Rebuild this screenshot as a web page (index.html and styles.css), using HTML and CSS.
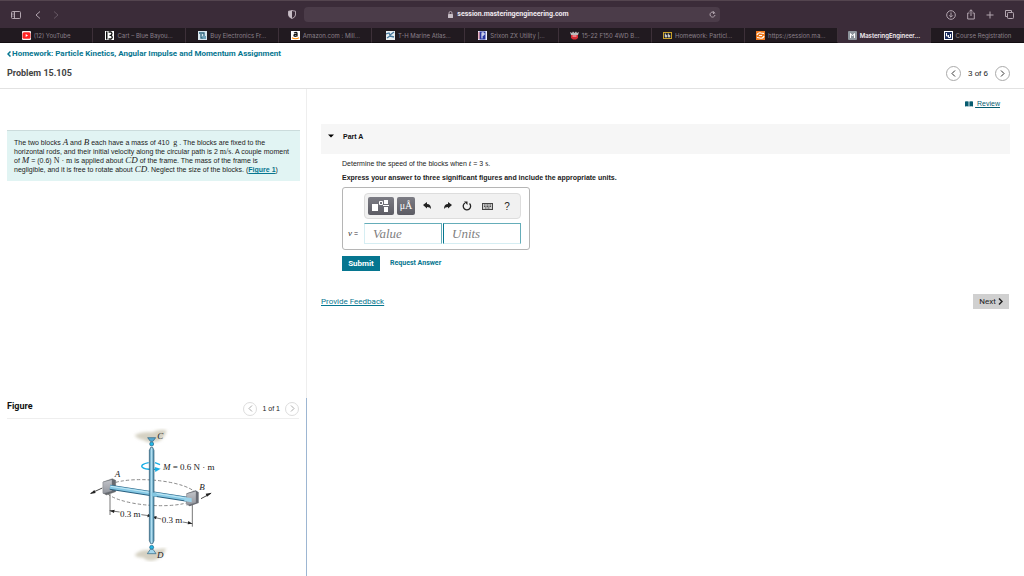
FILE: index.html
```html
<!DOCTYPE html>
<html lang="en">
<head>
<meta charset="utf-8">
<title>MasteringEngineering</title>
<link rel="stylesheet" href="styles.css">
</head>
<body>
<header class="browser">
  <div class="toolbar">
    <div class="tool-group tool-left">
      <button class="chrome-btn" aria-label="Sidebar"><svg width="10" height="8" viewBox="0 0 10 8"><rect x=".5" y=".5" width="9" height="7" rx="1"/><path d="M3.5 .5v7M1.5 2.2h1M1.5 3.7h1M1.5 5.2h1"/></svg></button>
      <button class="chrome-btn" aria-label="Back"><svg width="6" height="8" viewBox="0 0 6 8"><path d="M5 .5L1 4l4 3.500"/></svg></button>
      <button class="chrome-btn dim" aria-label="Forward"><svg width="6" height="8" viewBox="0 0 6 8"><path d="M1 .5L5 4 1 7.500"/></svg></button>
    </div>
    <button class="chrome-btn shield" aria-label="Privacy report"><svg width="8" height="9" viewBox="0 0 8 9"><path d="M4 .5Q6 1 7.500 1.200V5Q7.200 7.500 4 8.500 .8 7.500 .5 5V1.200Q2 1 4 .5z"/><path class="solid" d="M4 .5V8.500Q.8 7.500 .5 5V1.200Q2 1 4 .5z"/></svg></button>
    <div class="address">
      <span class="address-text"><svg width="5" height="7" viewBox="0 0 5 7"><rect class="lock" y="3" width="5" height="4" rx=".5"/><path d="M1 3V2a1.500 1.500 0 0 1 3 0v1"/></svg>session.masteringengineering.com</span>
      <button class="chrome-btn" aria-label="Reload"><svg width="7" height="7" viewBox="0 0 7 7"><path d="M5.800 2.500A2.500 2.500 0 1 0 6 4M3.700 .3L5.500 1.500 4 3"/></svg></button>
    </div>
    <div class="tool-group tool-right">
      <button class="chrome-btn" aria-label="Downloads"><svg width="10" height="10" viewBox="0 0 10 10"><circle cx="5" cy="5" r="4.300"/><path d="M5 2.500v4.500M3.200 5.400L5 7.200l1.800-1.800"/></svg></button>
      <button class="chrome-btn" aria-label="Share"><svg width="8" height="11" viewBox="0 0 8 11"><path d="M2.500 4H.7v6h6.600V4H5.500M4 7V.8M2.300 2.500L4 .8l1.700 1.700"/></svg></button>
      <button class="chrome-btn" aria-label="New tab"><svg width="8" height="8" viewBox="0 0 8 8"><path d="M4 .5v7M.5 4h7"/></svg></button>
      <button class="chrome-btn" aria-label="Tab overview"><svg width="9" height="9" viewBox="0 0 9 9"><rect x="2.500" y="2.500" width="6" height="6" rx=".8"/><path d="M2.500 6.500H.5v-6h6v2"/></svg></button>
    </div>
  </div>
  <nav class="tabs">
    <a class="tab" href="#"><svg class="fav" viewBox="0 0 9 9"><rect width="9" height="9" rx="1" fill="#f4f4f4"/><rect x=".5" y="1.200" width="8" height="6.600" rx="1.500" fill="#f22"/><path d="M3.700 3v3l2.300-1.500z" fill="#fff"/></svg>(12) YouTube</a>
    <a class="tab" href="#"><svg class="fav" viewBox="0 0 9 9"><rect width="9" height="9" fill="#fff"/><rect x="1" y=".5" width="1.500" height="8" fill="#111"/><path d="M3.500 1h2.500q2 1.500 0 3.300 2.500 1.800 0 3.700H3.500M4.500 4.300h1.500" fill="none" stroke="#111" stroke-width="1.300"/></svg>Cart – Blue Bayou...</a>
    <a class="tab" href="#"><svg class="fav" viewBox="0 0 9 9"><rect width="9" height="9" fill="#d8e6ee"/><path d="M1 2h5v5H3V3" fill="none" stroke="#2d647c" stroke-width="1.300"/><path d="M4 5h4v3H5z" fill="#6d9fb6"/></svg>Buy Electronics Fr...</a>
    <a class="tab" href="#"><svg class="fav" viewBox="0 0 9 9"><rect width="9" height="9" fill="#fff"/><path d="M3 2q3-1.500 3 .5v3M6 3.200q-3 0-3 1.300t3 .3" fill="none" stroke="#111" stroke-width="1.300"/><path d="M1 6.700q3.500 2 7 0" fill="none" stroke="#f80" stroke-width="1.100"/></svg>Amazon.com : Mill...</a>
    <a class="tab" href="#"><svg class="fav" viewBox="0 0 9 9"><rect width="9" height="9" fill="#e8eef2"/><path d="M0 3l3-1 1 2 4-3M1 7l3-2 4 1" fill="none" stroke="#46779c" stroke-width="1.300"/></svg>T-H Marine Atlas...</a>
    <a class="tab" href="#"><svg class="fav" viewBox="0 0 9 9"><rect width="9" height="9" fill="#eef"/><rect x="1.500" y=".5" width="6" height="8" fill="#2935a0"/><path d="M4 1.500v6M4 2h2v2H4" fill="none" stroke="#fff"/><path d="M1 1v7" stroke="#d55" stroke-width=".7"/></svg>Srixon ZX Utility |...</a>
    <a class="tab" href="#"><svg class="fav" viewBox="0 0 9 9"><path d="M0 1l2 1 1-1.500L4.500 2 6 .5 7 2l2-1-1 3H1z" fill="#bbb"/><path d="M1 4h7v3L6 8.500H3L1 7z" fill="#d72c35"/><path d="M2.500 5h4" stroke="#fff" stroke-width=".8"/></svg>15-22 F150 4WD B...</a>
    <a class="tab" href="#"><svg class="fav" viewBox="0 0 9 9"><rect x=".5" y="1.500" width="8" height="6" fill="#222" stroke="#c9a02a"/><path d="M2.300 2.500v3.500h1.400V4.300H2.300M5.300 2.500v3.500h1.400V4.300H5.300" fill="none" stroke="#fff" stroke-width=".8"/></svg>Homework: Particl...</a>
    <a class="tab" href="#"><svg class="fav" viewBox="0 0 9 9"><rect width="9" height="9" fill="#f07b20"/><path d="M1 4q1-3 4-2l3 .5M8 5q-1 3-4 2L1 6.500M3 4.500h3" fill="none" stroke="#fff" stroke-width="1.200"/></svg>https://session.ma...</a>
    <a class="tab active" href="#"><svg class="fav" viewBox="0 0 9 9"><rect width="9" height="9" rx="1" fill="#8d949c"/><path d="M2.500 7V2.500l2 2.500 2-2.500V7" fill="none" stroke="#fff"/></svg>MasteringEngineer...</a>
    <a class="tab" href="#"><svg class="fav" viewBox="0 0 9 9"><rect x=".5" y=".5" width="8" height="8" fill="#1d2d5c" stroke="#fff"/><path d="M2.500 2v3h2M4.500 4v2.500h2V3" fill="none" stroke="#fff"/></svg>Course Registration</a>
  </nav>
</header>

<div class="page-head">
  <div class="titles">
    <a class="crumb" href="#"><svg width="4" height="6" viewBox="0 0 4 6"><path d="M3.500 .5L1 3l2.500 2.500"/></svg>Homework: Particle Kinetics, Angular Impulse and Momentum Assignment</a>
    <h1 class="problem">Problem 15.105</h1>
  </div>
  <div class="pager">
    <button class="round" aria-label="Previous problem"><svg width="5" height="7" viewBox="0 0 5 7"><path d="M4 .5l-3 3 3 3"/></svg></button>
    <span>3 of 6</span>
    <button class="round" aria-label="Next problem"><svg width="5" height="7" viewBox="0 0 5 7"><path d="M1 .5l3 3-3 3"/></svg></button>
  </div>
</div>

<div class="columns">
  <aside class="side">
    <p class="statement">The two blocks <i>A</i> and <i>B</i> each have a mass of 410 &nbsp;<span class="math">g</span> . The blocks are fixed to the<br>horizontal rods, and their initial velocity along the circular path is 2 <span class="math">m/s</span>. A couple moment<br>of <i>M</i> = (0.6) <span class="math">N · m</span> is applied about <i>CD</i> of the frame. The mass of the frame is<br>negligible, and it is free to rotate about <i>CD</i>. Neglect the size of the blocks. (<a href="#">Figure 1</a>)</p>
    <section class="figure">
      <div class="figure-head">
        <h2>Figure</h2>
        <div class="pager small">
          <button class="round" aria-label="Previous figure"><svg width="5" height="7" viewBox="0 0 5 7"><path d="M4 .5l-3 3 3 3"/></svg></button>
          <span>1 of 1</span>
          <button class="round" aria-label="Next figure"><svg width="5" height="7" viewBox="0 0 5 7"><path d="M1 .5l3 3-3 3"/></svg></button>
        </div>
      </div>
      <svg class="diagram" width="170" height="145" viewBox="0 0 510 435" role="img" aria-label="Frame with blocks A and B on shaft CD">
        <defs>
          <linearGradient id="shaft"><stop offset="0" stop-color="#397d9f"/><stop offset=".45" stop-color="#b4e1f3"/><stop offset="1" stop-color="#3f82a3"/></linearGradient>
          <linearGradient id="block" x2="0" y2="1"><stop offset="0" stop-color="#c2c4c9"/><stop offset="1" stop-color="#92959d"/></linearGradient>
          <filter id="soft"><feGaussianBlur stdDeviation="4"/></filter>
        </defs>
        <path d="M194 30q25-12 52-8 20-11 44-6-6 24-24 33-32 7-46-4-20-4-26-15z" fill="#d5d1c3" filter="url(#soft)"/>
        <path d="M194 390q18-18 44-14l50-6q-8 27-30 34-25 8-38-6-20 0-26-8z" fill="#d5d1c3" filter="url(#soft)"/>
        <ellipse cx="243" cy="203" rx="137" ry="38" transform="rotate(4 243 203)" fill="none" stroke="#777" stroke-width="2.500" stroke-dasharray="10 6"/>
        <path d="M236 113c-34 6-26 22 22 20" fill="none" stroke="#18aee5" stroke-width="4"/>
        <path d="M255 113l15 6" stroke="#18aee5" stroke-width="4"/>
        <g stroke="#333" stroke-width="2"><path d="M120 207v63M367 240v65M119 257l30 4M214 269l30 4M248 276l26 6M338 291l29 5"/></g>
        <path d="M119 257l15-3-2 10zM367 296l-14 2 2-10zM245 273l-13 4 2-10zM247 276l13-3-2 10z" fill="#222"/>
        <path d="M97 189l-35 16M393 221l30-16" stroke="#222" stroke-width="2.500"/>
        <path d="M60 207l13-12 4 9zM425 203l-18 3 4 9z" fill="#222"/>
        <path d="M99 171l28-10 10 5v34l-28 10-10-6z" fill="#666a70" stroke="#555" stroke-width="1"/>
        <path d="M99 171l27-7v34l-27 8z" fill="url(#block)" stroke="#70757b"/>
        <path d="M120 187l232 36" stroke="#286080" stroke-width="15"/>
        <path d="M120 186l232 36" stroke="#86c9e5" stroke-width="10"/>
        <path d="M122 184l230 36" stroke="#c3e9f6" stroke-width="3"/>
        <path d="M350 205l27-9 9 6v32l-27 10-9-6z" fill="#686b73"/>
        <path d="M350 206l28-7v34l-28 8z" fill="url(#block)" stroke="#72767b"/>
        <path d="M343 216l22 4v12l-22-4z" fill="#9bd3ea"/>
        <path d="M238 76l4-9h6l4 9v271l-4 9h-6l-4-9z" fill="url(#shaft)" stroke="#315c74" stroke-width="2"/>
        <path d="M245 202l15 3v11l-15-3z" fill="#83c6e1"/>
        <path d="M233 38h24l-8 11h-8z" fill="#56a7cf" stroke="#286080" stroke-width="2"/>
        <circle cx="245" cy="57" r="6" fill="#20b7e6" stroke="#286080" stroke-width="2"/>
        <circle cx="245" cy="367" r="6" fill="#20b7e6" stroke="#286080" stroke-width="2"/>
        <path d="M241 373h8l9 13h-26z" fill="#a5d7ec" stroke="#286080" stroke-width="2"/>
        <path d="M254 126l18 5-16 10z" fill="#18aee5"/>
        <g class="diagram-text">
          <text x="262" y="41" class="it">C</text><text x="134" y="156" class="it">A</text><text x="388" y="194" class="it">B</text><text x="261" y="398" class="it">D</text>
          <text x="279" y="136"><tspan class="it">M</tspan> = 0.6 N · m</text>
          <text x="150" y="276">0.3 m</text><text x="275" y="294">0.3 m</text>
        </g>
      </svg>
    </section>
  </aside>

  <main class="main">
    <a class="review" href="#"><svg width="8" height="6" viewBox="0 0 8 6"><path d="M0 .5Q2 0 3.600 .5v5Q2 5 0 5.500zM4.400 .5Q6 0 8 .5v5q-2-.5-3.600 0z"/></svg><span>&nbsp;Review</span></a>
    <h2 class="part"><svg width="6" height="4" viewBox="0 0 6 4"><path d="M0 .5h6L3 3.500z"/></svg>Part A</h2>
    <form class="answer">
      <p>Determine the speed of the blocks when <i>t</i> = 3 <span class="math">s</span>.</p>
      <p class="instruction">Express your answer to three significant figures and include the appropriate units.</p>
      <div class="answer-box">
        <div class="math-tools">
          <button type="button" class="dark" aria-label="Templates"><svg width="20" height="14" viewBox="0 0 20 14"><path class="white" d="M1 5h6v7H1zM13 1h4v4h-4zM13 8h4v5h-4zM12 6h6v1h-6z"/><path class="outline" d="M8.500 2.500h3v3h-3z"/></svg></button>
          <button type="button" class="dark mu">μÅ</button>
          <button type="button" class="plain" aria-label="Undo"><svg width="9" height="8" viewBox="0 0 9 8"><path class="fill" d="M0 3L4 0v2q4 0 4 5-1-2-4-2v1.500z"/></svg></button>
          <button type="button" class="plain" aria-label="Redo"><svg width="9" height="8" viewBox="0 0 9 8"><path class="fill" d="M9 3L5 0v2Q1 2 1 7q1-2 4-2v1.500z"/></svg></button>
          <button type="button" class="plain" aria-label="Reset"><svg width="10" height="10" viewBox="0 0 10 10"><path class="line" d="M3 2a3.700 3.700 0 1 0 4.500.5"/><path class="fill" d="M2 .5h3.500V4z"/></svg></button>
          <button type="button" class="plain" aria-label="Keyboard"><svg width="11" height="7" viewBox="0 0 11 7"><rect x=".5" y=".5" width="10" height="6" fill="#ccc" stroke="#444"/><path d="M2 2h7M2 3.500h7M3 5h5" stroke="#444" stroke-width=".9" stroke-dasharray="1 .5"/></svg></button>
          <button type="button" class="plain help">?</button>
        </div>
        <label class="v-label" for="value"><i>v</i> =</label>
        <div class="fields"><input id="value" placeholder="Value"><input id="units" placeholder="Units" aria-label="Units"></div>
      </div>
      <div class="actions"><button type="button" class="submit">Submit</button><a href="#">Request Answer</a></div>
    </form>
    <div class="foot"><a href="#">Provide Feedback</a><button class="next">Next <svg width="5" height="7" viewBox="0 0 5 7"><path d="M1 .5l3 3-3 3"/></svg></button></div>
  </main>
</div>
</body>
</html>
```

FILE: styles.css
```css
* { box-sizing: border-box; }
body { margin: 0; min-height: 100vh; display: flex; flex-direction: column; background: #fff; color: #222; font: 7px/9px "Liberation Sans", Arial, sans-serif; }
h1, h2, p { margin: 0; }
button { padding: 0; border: 0; background: none; color: inherit; font: inherit; display: inline-flex; align-items: center; justify-content: center; }
svg { flex: none; }
a { color: #067690; }

.browser { background: #3b2c39; border-top: 1px solid #54454f; }
.toolbar { height: 27px; display: grid; grid-template-columns: 287px 10px minmax(0, 423px) 1fr; align-items: center; }
.chrome-btn svg, .address svg { fill: none; stroke: #b3a6b0; }
.chrome-btn .solid, .address .lock { fill: #c8bec6; stroke: none; }
.dim { opacity: .35; }
.tool-left { display: flex; gap: 14px; padding-left: 11px; align-items: center; }
.tool-left .dim { margin-left: -2px; }
.tool-right { display: flex; gap: 11px; padding-right: 10px; justify-content: flex-end; align-items: center; }
.address { margin-left: 7px; height: 15px; border-radius: 4px; background: #4b3c49; display: flex; align-items: center; padding: 0 4px; }
.address-text { flex: 1; display: flex; gap: 4px; align-items: center; justify-content: center; color: #f0eaf0; font: bold 7px/9px Roboto, "Liberation Sans", sans-serif; }
.tabs { height: 15px; display: grid; grid-template-columns: repeat(11, minmax(0, 1fr)); background: #211a20; }
.tab { display: flex; align-items: center; justify-content: center; gap: 3px; color: #8b808a; text-decoration: none; font: 6px/9px Inter, "Liberation Sans", sans-serif; white-space: nowrap; border-right: 1px solid #3d3039; border-bottom: 1px solid #120d11; }
.tab:last-child { border-right: 0; }
.tab.active { background: #3b2c39; color: #f2edf2; font-weight: 600; border-bottom-color: #3b2c39; }
.fav { width: 9px; height: 9px; }

.page-head { height: 46px; border-bottom: 1px solid #e2e2e2; display: flex; justify-content: space-between; padding: 6px 14px 0 7px; }
.titles { display: flex; flex-direction: column; gap: 8px; }
.crumb { display: flex; align-items: center; gap: 1px; font: bold 8px/10px Roboto, "Liberation Sans", sans-serif; text-decoration: none; }
.crumb svg { fill: none; stroke: currentColor; stroke-width: 1.5; }
.problem { font: bold 9px/12px Roboto, "Liberation Sans", sans-serif; color: #444; }
.pager { display: flex; align-items: center; gap: 7px; font-size: 8px; }
.page-head .pager { padding-top: 10px; }
.round { width: 15px; height: 15px; border: 1px solid #aaa; border-radius: 50%; }
.round svg { fill: none; stroke: #333; }
.small { gap: 5px; font-size: 7px; }
.small .round { width: 14px; height: 14px; border-color: #ddd; }
.small .round svg { stroke: #aaa; }
.pager.small { padding-top: 1px; }

.columns { flex: 1; display: grid; grid-template-columns: 307px minmax(0, 1fr); }
.side { display: flex; flex-direction: column; justify-content: space-between; padding-top: 41px; }
.main { border-left: 1px solid #eee; margin-left: -1px; }
.statement { margin: 0 7px; padding: 7px; background: #e1f4f3; border-top: 1px solid #cbdcdc; white-space: nowrap; }
.statement a { font-weight: bold; }
i, .math { font-family: "Liberation Serif", "Times New Roman", serif; }
.math { font-size: 8px; line-height: 8px; }
i { font-size: 9px; line-height: 8px; }
.figure { border-right: 1px solid #9db6d2; position: relative; min-height: 178px; padding-left: 7px; }
.figure-head { display: flex; justify-content: space-between; height: 21px; margin-right: 7px; border-bottom: 1px solid #eee; }
.figure h2 { font: bold 9px/17px Roboto, "Liberation Sans", sans-serif; color: #111; }
.diagram { display: block; margin: 6px 0 6px 63px; }
.diagram-text { font: 27px "Liberation Serif", serif; fill: #222; }
.it { font-style: italic; }

.review { display: flex; justify-content: flex-end; align-items: center; padding: 10px 24px 0 0; text-decoration: none; color: #075c70; }
.review span { text-decoration: underline; }
.review svg { fill: currentColor; margin-right: 2px; }
.part { margin: 16px 14px 0; height: 30px; padding: 0 0 6px 7px; background: #f6f6f6; display: flex; align-items: center; gap: 9px; font-size: 7px; color: #111; }
.part + .answer { margin: 5px 14px 0 35px; }
.answer { display: flex; flex-direction: column; align-items: flex-start; }
.answer .instruction { margin-top: 5px; font-weight: bold; }
.answer-box { margin-top: 5px; border: 1px solid #b5b5b5; border-radius: 3px; padding: 5px 8px 5px 5px; display: grid; grid-template-columns: 16px 157px; row-gap: 4px; align-items: center; }
.math-tools { grid-column: 2; height: 26px; border: 1px solid #ddd; border-radius: 4px; background: #f1f1f1; display: flex; align-items: center; padding: 0 3px; }
.dark { height: 18px; width: 26px; border-radius: 2px; background: linear-gradient(#7c7c84, #5c5c64); color: #fff; }
.mu { width: 18px; margin: 0 2px 0 3px; font: 10px/12px "Liberation Serif", serif; }
.plain { flex: 1; height: 18px; }
.plain .fill { fill: #222; }
.plain .line { fill: none; stroke: #222; stroke-width: 1.3; }
.white { fill: #fff; }
.outline { fill: none; stroke: #fff; }
.help { font-size: 10px; }
.v-label { color: #333; white-space: nowrap; }
.fields { display: grid; grid-template-columns: 1fr 1fr; gap: 1px; }
.fields input { min-width: 0; height: 21px; padding: 0 8px; border: 1px solid #65adb9; border-bottom-color: #d6eef3; border-radius: 0; background: #fff; color: #333; font: italic 13px/18px "Liberation Serif", serif; }
.fields input:first-child { border-left-color: #d6eef3; }
.fields input:last-child { border-left-color: #067690; }
.fields input::placeholder { color: #808080; opacity: 1; }
.actions { display: flex; align-items: center; gap: 10px; margin-top: 6px; font: bold 7px/9px Roboto, "Liberation Sans", sans-serif; }
.actions a { text-decoration: none; }
.submit { width: 38px; height: 15px; background: #067690; color: #fff; font-size: 8px; }
.foot { margin: 23px 15px 0 14px; display: flex; justify-content: space-between; align-items: center; font: 8px/10px Roboto, "Liberation Sans", sans-serif; }
.next { width: 36px; height: 15px; background: #d0d0d0; gap: 2px; }
.next svg { fill: none; stroke: #222; stroke-width: 1.5; }
```
